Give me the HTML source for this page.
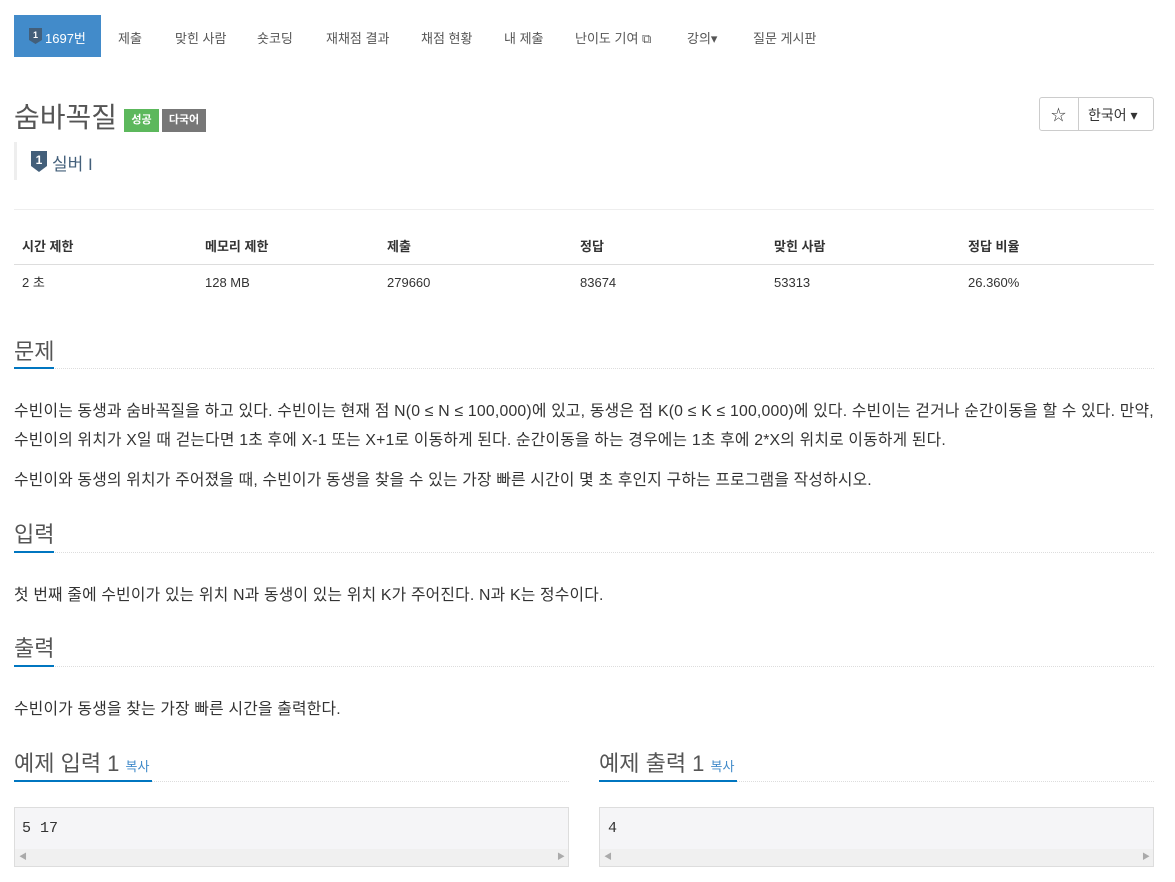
<!DOCTYPE html>
<html><head><meta charset="utf-8"><style>
*{box-sizing:border-box;margin:0;padding:0}
body{width:1175px;height:882px;background:#fff;font-family:"Liberation Sans","Noto Sans CJK KR",sans-serif;color:#333;position:relative;overflow:hidden}
.a{position:absolute;white-space:nowrap}
.nav{font-size:13px;color:#555;top:28px}
.h{font-size:22px;color:#555}
.ul{position:absolute;height:2px;background:#0076c0}
.dl{position:absolute;height:1px;border-top:1px dotted #ddd}
.p{font-size:15.8px;letter-spacing:0.2px;color:#333}
.t{font-size:13px;line-height:1.2}
</style></head><body>
<div class="a" style="left:14px;top:15px;width:87px;height:42px;background:#428bca"></div>
<svg class="a" style="left:29px;top:28px" width="13" height="16" viewBox="0 0 13 16"><path d="M0 0H13V12L6.5 16L0 12Z" fill="#435f7a"/><text x="6.5" y="10" font-size="9" fill="#fff" text-anchor="middle" font-family="Liberation Sans" font-weight="bold">1</text></svg>
<div class="a nav" style="left:45px;color:#fff">1697번</div>
<div class="a nav" style="left:118px">제출</div>
<div class="a nav" style="left:175px">맞힌 사람</div>
<div class="a nav" style="left:257px">숏코딩</div>
<div class="a nav" style="left:326px">재채점 결과</div>
<div class="a nav" style="left:421px">채점 현황</div>
<div class="a nav" style="left:504px">내 제출</div>
<div class="a nav" style="left:575px">난이도 기여 ⧉</div>
<div class="a nav" style="left:687px">강의▾</div>
<div class="a nav" style="left:753px">질문 게시판</div>

<div class="a" style="left:14px;top:96px;font-size:28px;color:#555">숨바꼭질</div>
<div class="a" style="left:124px;top:109px;width:35px;height:23px;background:#5cb85c;color:#fff;font-size:11px;text-align:center;line-height:23px;font-weight:bold">성공</div>
<div class="a" style="left:162px;top:109px;width:44px;height:23px;background:#777;color:#fff;font-size:11px;text-align:center;line-height:23px;font-weight:bold">다국어</div>
<div class="a" style="left:14px;top:142px;width:3px;height:38px;background:#eee"></div>
<svg class="a" style="left:31px;top:151px" width="16" height="21" viewBox="0 0 16 21"><path d="M0 0H16V15L8 21L0 15Z" fill="#435f7a"/><text x="8" y="13" font-size="12" fill="#fff" text-anchor="middle" font-family="Liberation Sans" font-weight="bold">1</text></svg>
<div class="a" style="left:52px;top:150px;font-size:17px;color:#435f7a">실버 I</div>

<div class="a" style="left:1039px;top:97px;width:115px;height:34px;border:1px solid #ccc;border-radius:3px"></div>
<div class="a" style="left:1078px;top:97px;width:1px;height:34px;background:#ccc"></div>
<div class="a" style="left:1051px;top:104px;font-size:15px">☆</div>
<div class="a" style="left:1088px;top:105px;font-size:14px">한국어 ▾</div>

<div class="a" style="left:14px;top:209px;width:1140px;height:1px;background:#eee"></div>
<div class="a t" style="left:22px;top:239px;font-weight:bold">시간 제한</div>
<div class="a t" style="left:205px;top:239px;font-weight:bold">메모리 제한</div>
<div class="a t" style="left:387px;top:239px;font-weight:bold">제출</div>
<div class="a t" style="left:580px;top:239px;font-weight:bold">정답</div>
<div class="a t" style="left:774px;top:239px;font-weight:bold">맞힌 사람</div>
<div class="a t" style="left:968px;top:239px;font-weight:bold">정답 비율</div>
<div class="a" style="left:14px;top:264px;width:1140px;height:1px;background:#ddd"></div>
<div class="a t" style="left:22px;top:275px">2 초</div>
<div class="a t" style="left:205px;top:275px">128 MB</div>
<div class="a t" style="left:387px;top:275px">279660</div>
<div class="a t" style="left:580px;top:275px">83674</div>
<div class="a t" style="left:774px;top:275px">53313</div>
<div class="a t" style="left:968px;top:275px">26.360%</div>

<div class="a h" style="left:14px;top:334px">문제</div>
<div class="dl" style="left:14px;top:368px;width:1140px"></div><div class="ul" style="left:14px;top:367px;width:40px"></div>
<div class="a p" style="left:14px;top:398px">수빈이는 동생과 숨바꼭질을 하고 있다. 수빈이는 현재 점 N(0 ≤ N ≤ 100,000)에 있고, 동생은 점 K(0 ≤ K ≤ 100,000)에 있다. 수빈이는 걷거나 순간이동을 할 수 있다. 만약,</div>
<div class="a p" style="left:14px;top:427px">수빈이의 위치가 X일 때 걷는다면 1초 후에 X-1 또는 X+1로 이동하게 된다. 순간이동을 하는 경우에는 1초 후에 2*X의 위치로 이동하게 된다.</div>
<div class="a p" style="left:14px;top:467px">수빈이와 동생의 위치가 주어졌을 때, 수빈이가 동생을 찾을 수 있는 가장 빠른 시간이 몇 초 후인지 구하는 프로그램을 작성하시오.</div>

<div class="a h" style="left:14px;top:517px">입력</div>
<div class="dl" style="left:14px;top:552px;width:1140px"></div><div class="ul" style="left:14px;top:551px;width:40px"></div>
<div class="a p" style="left:14px;top:582px">첫 번째 줄에 수빈이가 있는 위치 N과 동생이 있는 위치 K가 주어진다. N과 K는 정수이다.</div>

<div class="a h" style="left:14px;top:631px">출력</div>
<div class="dl" style="left:14px;top:666px;width:1140px"></div><div class="ul" style="left:14px;top:665px;width:40px"></div>
<div class="a p" style="left:14px;top:696px">수빈이가 동생을 찾는 가장 빠른 시간을 출력한다.</div>

<div class="a h" style="left:14px;top:746px">예제 입력 1 <span style="font-size:13px;color:#428bca">복사</span></div>
<div class="dl" style="left:14px;top:781px;width:555px"></div><div class="ul" style="left:14px;top:780px;width:138px"></div>
<div class="a h" style="left:599px;top:746px">예제 출력 1 <span style="font-size:13px;color:#428bca">복사</span></div>
<div class="dl" style="left:599px;top:781px;width:555px"></div><div class="ul" style="left:599px;top:780px;width:138px"></div>

<div class="a" style="left:14px;top:807px;width:555px;height:60px;border:1px solid #ddd;background:#f5f5f7"></div>
<div class="a" style="left:15px;top:849px;width:553px;height:17px;background:#f0f0f0"></div>
<div class="a" style="left:22px;top:820px;font-family:'Liberation Mono',monospace;font-size:15px">5 17</div>
<div class="a" style="left:19px;top:851px;font-size:8px;color:#aaa">◀</div><div class="a" style="left:557px;top:851px;font-size:8px;color:#aaa">▶</div>
<div class="a" style="left:599px;top:807px;width:555px;height:60px;border:1px solid #ddd;background:#f5f5f7"></div>
<div class="a" style="left:600px;top:849px;width:553px;height:17px;background:#f0f0f0"></div>
<div class="a" style="left:608px;top:820px;font-family:'Liberation Mono',monospace;font-size:15px">4</div>
<div class="a" style="left:604px;top:851px;font-size:8px;color:#aaa">◀</div><div class="a" style="left:1142px;top:851px;font-size:8px;color:#aaa">▶</div>
</body></html>
